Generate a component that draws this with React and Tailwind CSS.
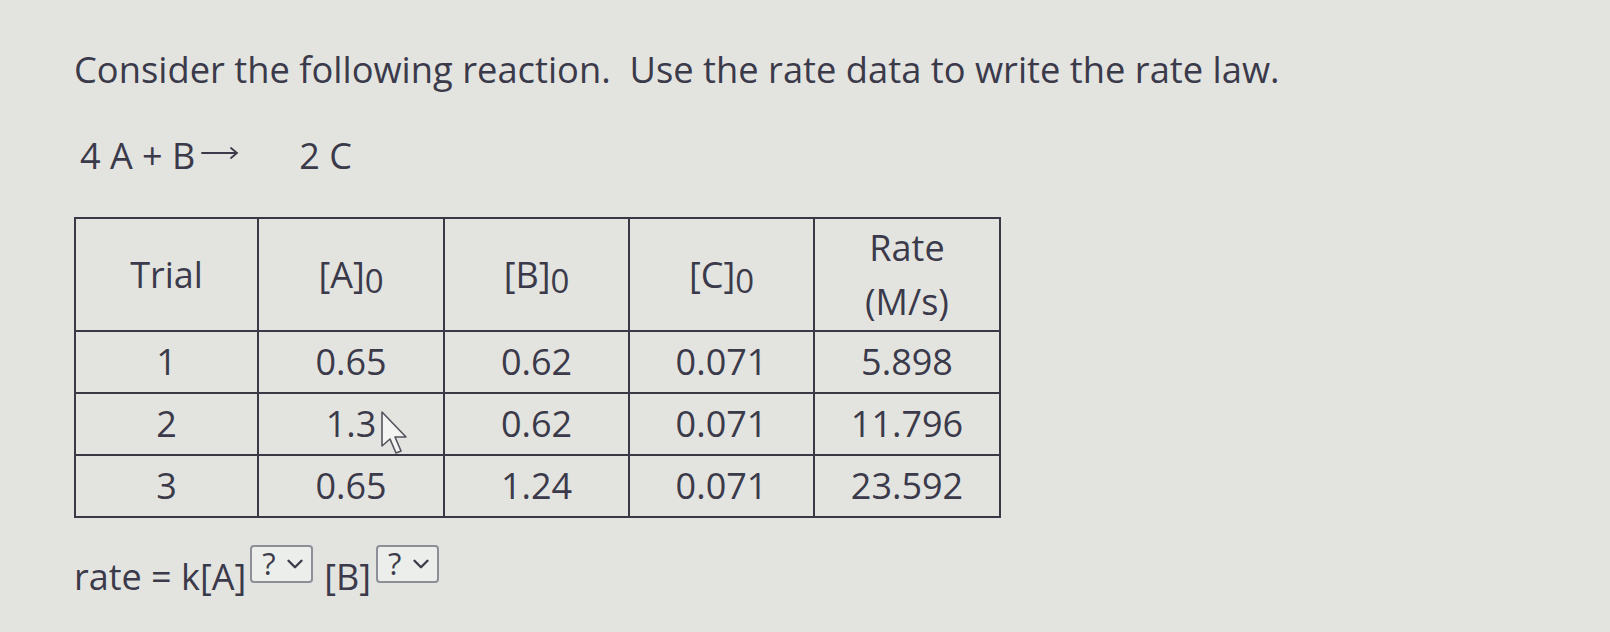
import { FiChevronDown } from "react-icons/fi";

const rows = [
    ["1", "0.65", "0.62", "0.071", "5.898"],
    ["2", "1.3", "0.62", "0.071", "11.796"],
    ["3", "0.65", "1.24", "0.071", "23.592"],
];

function Conc({ letter }) {
    return (
        <span>
            [{letter}]<span className="relative top-[5px] text-[33px]">0</span>
        </span>
    );
}

// mouse pointer sitting over row 2
function Cursor() {
    return (
        <svg
            className="absolute left-[121px] top-[16px]"
            width="30"
            height="46"
            viewBox="0 0 30 46"
        >
            <path
                d="M2 2 L2 36 L10 29 L16 43 L21 41 L15 27 L26 27 Z"
                fill="#f4f4f2"
                stroke="#55525e"
                strokeWidth="1.6"
                strokeLinejoin="round"
            />
        </svg>
    );
}

function Arrow() {
    return (
        <svg className="inline-block mx-[6px] relative top-[-3px]" width="38" height="14" viewBox="0 0 38 14">
            <path d="M1 7 H36 M30 2 L36 7 L30 12" fill="none" stroke="#3b3a4a" strokeWidth="1.8" strokeLinecap="round" />
        </svg>
    );
}

function Picker() {
    return (
        <span className="inline-flex items-center gap-[6px] h-[38px] w-[63px] pl-[10px] border-2 border-[#8e8e98] rounded-[4px] bg-[#eceeeb] text-[31px] leading-none text-[#3b3b4a] relative top-[-15px]">
            ?
            <FiChevronDown className="text-[26px] stroke-[2.2]" />
        </span>
    );
}

export default function App() {
    return (
        <div
            className="min-h-[632px] bg-[#e3e4e0] pl-[74px] pt-[47px] text-[#3b3a4a]"
            style={{ fontFamily: '"Open Sans", sans-serif' }}
        >
            <h1 className="text-[36.3px] leading-[44px]">
                Consider the following reaction.&nbsp; Use the rate data to write the rate law.
            </h1>

            <p className="mt-[43px] text-[36px] leading-[44px] pl-[6px] flex items-center">
                <span>4 A + B</span>
                <Arrow />
                <span className="ml-[54px]">2 C</span>
            </p>

            <table className="mt-[39px] border-collapse text-[36px] text-center">
                <thead>
                    <tr className="h-[113px]">
                        <th className="w-[183px] border-2 border-[#3c3744] font-normal">Trial</th>
                        <th className="w-[186px] border-2 border-[#3c3744] font-normal"><Conc letter="A" /></th>
                        <th className="w-[185px] border-2 border-[#3c3744] font-normal"><Conc letter="B" /></th>
                        <th className="w-[185px] border-2 border-[#3c3744] font-normal"><Conc letter="C" /></th>
                        <th className="w-[186px] border-2 border-[#3c3744] font-normal leading-[54px]">
                            Rate
                            <br />
                            (M/s)
                        </th>
                    </tr>
                </thead>
                <tbody>
                    {rows.map((r, i) => (
                        <tr key={i} className="h-[62px]">
                            {r.map((c, j) => (
                                <td key={j} className="border-2 border-[#3c3744] relative">
                                    {c}
                                    {i === 1 && j === 1 && <Cursor />}
                                </td>
                            ))}
                        </tr>
                    ))}
                </tbody>
            </table>

            <p className="mt-[37px] text-[36px] leading-[44px] flex items-end">
                <span>rate = k[A]</span>
                <span className="ml-[4px]"><Picker /></span>
                <span className="ml-[11px]">[B]</span>
                <span className="ml-[5px]"><Picker /></span>
            </p>
        </div>
    );
}
